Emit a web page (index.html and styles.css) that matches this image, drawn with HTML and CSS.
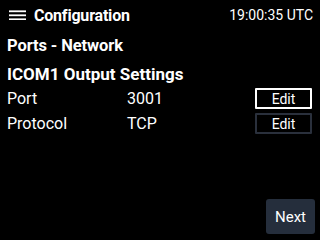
FILE: index.html
```html
<!DOCTYPE html>
<html>
<head>
<meta charset="utf-8">
<link rel="stylesheet" href="styles.css">
</head>
<body>
<div class="screen">
  <div class="header">
    <div class="title-wrap">
      <svg class="menu" width="17" height="10" viewBox="0 0 17 10"><rect x="0" y="0.4" width="17" height="1.8" fill="#fff"/><rect x="0" y="4.4" width="17" height="1.8" fill="#fff"/><rect x="0" y="8.4" width="17" height="1.8" fill="#fff"/></svg>
      <span class="title">Configuration</span>
    </div>
    <span class="clock">19:00:35 UTC</span>
  </div>
  <div class="section first">Ports - Network</div>
  <div class="section sub">ICOM1 Output Settings</div>
  <div class="rows">
    <div class="row">
      <span class="label">Port</span>
      <span class="value">3001</span>
      <button class="edit active">Edit</button>
    </div>
    <div class="row">
      <span class="label">Protocol</span>
      <span class="value">TCP</span>
      <button class="edit">Edit</button>
    </div>
  </div>
  <div class="footer">
    <button class="next">Next</button>
  </div>
</div>
</body>
</html>
```
FILE: styles.css
```css
html, body {
  margin: 0;
  padding: 0;
  background: #000;
}
.screen {
  width: 320px;
  height: 240px;
  background: #000;
  color: #fff;
  font-family: Roboto, "Liberation Sans", sans-serif;
  display: flex;
  flex-direction: column;
  box-sizing: border-box;
}
.header {
  display: flex;
  justify-content: space-between;
  align-items: center;
  height: 30px;
  padding: 0 7px 0 9px;
}
.title-wrap {
  display: flex;
  align-items: center;
  gap: 8px;
}
.title {
  font-weight: 700;
  font-size: 16px;
  letter-spacing: -0.2px;
}
.clock {
  font-size: 14px;
}
.section {
  font-weight: 700;
  font-size: 16.5px;
  padding-left: 7px;
  height: 28px;
  line-height: 28px;
  letter-spacing: -0.1px;
}
.section.first {
  margin-top: 2px;
}
.section.sub {
  font-size: 17px;
  letter-spacing: 0;
}
.rows {
  display: flex;
  flex-direction: column;
  gap: 4px;
  padding: 0 8px 0 7px;
}
.row {
  display: grid;
  grid-template-columns: 120px 1fr 57px;
  align-items: center;
  height: 21px;
  font-size: 16px;
}
.edit {
  box-sizing: border-box;
  width: 57px;
  height: 21px;
  background: #000;
  color: #fff;
  font-family: Roboto, "Liberation Sans", sans-serif;
  font-size: 14px;
  border: 2px solid #2a303c;
  border-radius: 1px;
  padding: 0;
}
.edit.active {
  border-color: #fff;
}
.footer {
  margin-top: auto;
  display: flex;
  justify-content: flex-end;
  padding: 0 5px 6px 0;
}
.next {
  width: 49px;
  height: 35px;
  background: #252e3c;
  color: #fff;
  border: none;
  border-radius: 3px;
  font-family: Roboto, "Liberation Sans", sans-serif;
  font-size: 15px;
  padding: 0;
}
```
